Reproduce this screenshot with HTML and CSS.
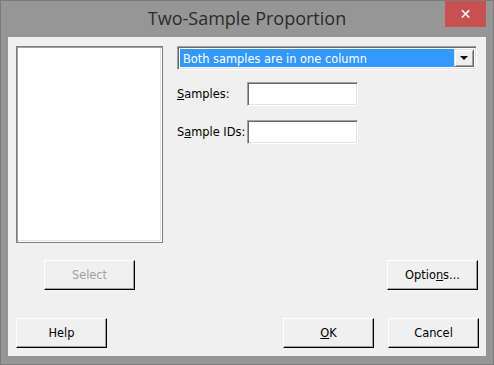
FILE: index.html
```
<!DOCTYPE html>
<html lang="en">
<head>
    <meta charset="UTF-8">
    <title>Two-Sample Proportion</title>
    <link rel="stylesheet" href="styles.css">
</head>
<body>

    <div class="window">
        <!-- Title bar -->
        <div class="titlebar">
            <span class="title">Two-Sample Proportion</span>
            <button class="close-btn">&#x2715;</button>
        </div>

        <div class="client">
            <div class="top">
                <!-- Variables list -->
                <div class="left-col">
                    <div class="list-box"></div>
                    <button class="btn" disabled>Select</button>
                </div>

                <div class="right-col">
                    <div class="combo">
                        <span class="combo-value">Both samples are in one column</span>
                        <span class="combo-arrow"></span>
                    </div>

                    <div class="field">
                        <label><u>S</u>amples:</label>
                        <input type="text" class="text-box">
                    </div>
                    <div class="field">
                        <label>S<u>a</u>mple IDs:</label>
                        <input type="text" class="text-box">
                    </div>

                    <button class="btn options-btn">Optio<u>n</u>s...</button>
                </div>
            </div>

            <div class="bottom">
                <button class="btn">Help</button>
                <button class="btn ok-btn"><u>O</u>K</button>
                <button class="btn">Cancel</button>
            </div>
        </div>
    </div>

</body>
</html>
```

FILE: styles.css
```
/* General */
body {
    margin: 0;
    background: #ffffff;
    font-family: "DejaVu Sans", Tahoma, sans-serif;
    font-size: 11.4px;
    color: #000;
}

/* Window frame */
.window {
    width: 494px;
    height: 365px;
    box-sizing: border-box;
    background: #969696;
    border: 1px solid #7a7a7a;
    display: flex;
    flex-direction: column;
}

.titlebar {
    height: 36px;
    display: flex;
    justify-content: center;
    position: relative;
}

.title {
    font-family: "Open Sans", "Noto Sans", sans-serif;
    font-size: 18px;
    color: #2b2b2b;
    margin-top: 5px;
}

.close-btn {
    position: absolute;
    top: 0;
    right: 7px;
    width: 41px;
    height: 26px;
    border: none;
    padding: 0;
    background: #c75050;
    color: #fff;
    font-size: 14px;
    font-weight: bold;
    font-family: "DejaVu Sans", sans-serif;
}

/* Client area */
.client {
    margin: 0 7px;
    height: 319px;
    background: #f0f0f0;
    padding: 9px 8px 0 8px;
    box-sizing: border-box;
}

.top {
    display: grid;
    grid-template-columns: 147px 300px;
    column-gap: 14px;
}

.left-col {
    display: flex;
    flex-direction: column;
    align-items: center;
}

.list-box {
    width: 147px;
    height: 197px;
    box-sizing: border-box;
    background: #fff;
    border: 1px solid #7e7e7e;
    box-shadow: inset 1px 1px #a0a0a0, inset -1px -1px #fff, inset -2px -2px #e3e3e3;
    padding: 2px;
    margin-bottom: 17px;
}

.right-col {
    display: flex;
    flex-direction: column;
}

/* Dropdown */
.combo {
    height: 24px;
    box-sizing: border-box;
    display: flex;
    padding: 2px;
    background: #fff;
    border-top: 1px solid #a0a0a0;
    border-left: 1px solid #a0a0a0;
    border-right: 1px solid #fff;
    border-bottom: 1px solid #fff;
    box-shadow: inset 1px 1px #696969, inset -1px -1px #e3e3e3;
}

.combo-value {
    flex: 1;
    background: #3399ff;
    color: #fff;
    padding-left: 3px;
    line-height: 20px;
}

.combo-arrow {
    width: 20px;
    box-sizing: border-box;
    background: #f0f0f0;
    border-top: 1px solid #e3e3e3;
    border-left: 1px solid #e3e3e3;
    border-right: 1px solid #696969;
    border-bottom: 1px solid #696969;
    box-shadow: inset 1px 1px #fff, inset -1px -1px #a0a0a0;
    display: flex;
    align-items: center;
    justify-content: center;
}

.combo-arrow::after {
    content: "";
    border-left: 4px solid transparent;
    border-right: 4px solid transparent;
    border-top: 4px solid #000;
}

/* Input rows */
.field {
    display: flex;
    align-items: center;
    margin-top: 12px;
}

.field + .field {
    margin-top: 14px;
}

.field label {
    width: 70px;
    white-space: nowrap;
}

.text-box {
    width: 111px;
    height: 24px;
    box-sizing: border-box;
    margin: 0;
    background: #fff;
    border-top: 1px solid #a0a0a0;
    border-left: 1px solid #a0a0a0;
    border-right: 1px solid #fff;
    border-bottom: 1px solid #fff;
    box-shadow: inset 1px 1px #696969, inset -1px -1px #e3e3e3;
}

/* Buttons */
.btn {
    width: 91px;
    height: 30px;
    box-sizing: border-box;
    padding: 0;
    background: #f0f0f0;
    font-family: inherit;
    font-size: 11.4px;
    color: #000;
    border-top: 1px solid #fff;
    border-left: 1px solid #fff;
    border-right: 1px solid #000;
    border-bottom: 1px solid #000;
    box-shadow: inset -1px -1px #a0a0a0;
}

.btn:disabled {
    color: #a0a0a0;
}

.options-btn {
    margin-top: auto;
    align-self: flex-end;
    margin-right: -1px;
}

.bottom {
    display: flex;
    gap: 14px;
    margin-top: 28px;
}

.ok-btn {
    margin-left: auto;
}

.bottom .btn:last-child {
    margin-right: -1px;
}
```
